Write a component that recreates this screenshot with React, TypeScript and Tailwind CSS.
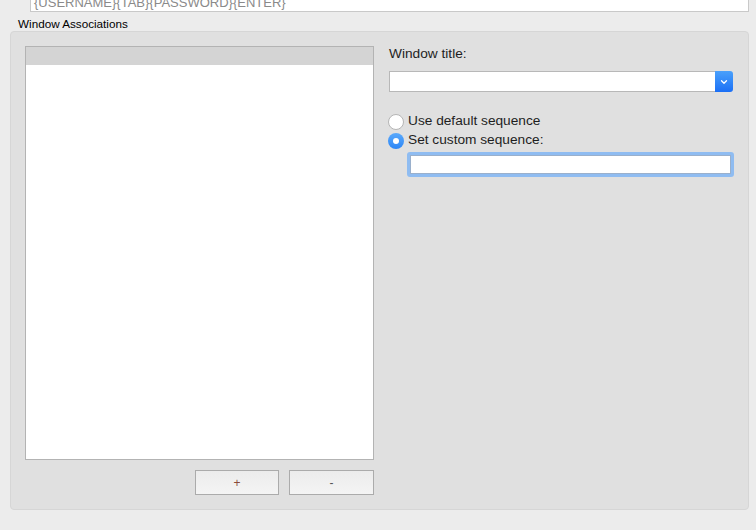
import { ChevronDown } from "lucide-react";

const App = () => {
  return (
    <div
      className="w-[756px] h-[530px] bg-[#ececec] overflow-hidden text-[13.7px] text-[#1e1e1e]"
      style={{ fontFamily: '"Liberation Sans", Arial, sans-serif' }}
    >
      {/* sequence field, scrolled partly out of view */}
      <div className="ml-[30px] mr-[7px] -mt-[12px] h-[24px] bg-white border border-[#c9c9c9] pl-[3px] text-[#8a8a8a] pt-[6px] leading-[15px] text-[13px] overflow-hidden">
        {"{USERNAME}{TAB}{PASSWORD}{ENTER}"}
      </div>

      <div className="ml-[18px] mt-[5px] text-[11.7px] leading-[13px] text-black">Window Associations</div>

      <div className="ml-[10px] mr-[7px] mt-[1px] h-[479px] bg-[#e0e0e0] border border-[#d6d6d6] rounded-[4px] flex">
        {/* left: list + buttons */}
        <div className="ml-[14px] mt-[14px] w-[349px] flex flex-col">
          <div className="h-[414px] border border-[#b3b3b3] bg-white flex flex-col">
            <div className="h-[18px] bg-[#d4d4d4]" />
          </div>
          <div className="mt-[10px] flex justify-end gap-[10px]">
            <button className="w-[84px] h-[25px] border border-[#ababab] bg-gradient-to-b from-[#ececec] to-[#f4f4f4] text-[12px] text-[#8a4a3a] leading-none">
              +
            </button>
            <button className="w-[85px] h-[25px] border border-[#ababab] bg-gradient-to-b from-[#ececec] to-[#f4f4f4] text-[12px] text-[#555] leading-none">
              -
            </button>
          </div>
        </div>

        {/* right: window settings */}
        <div className="ml-[15px] mt-[14px] w-[344px] flex flex-col">
          <div className="leading-[16px]">Window title:</div>
          <div className="mt-[9px] h-[21px] flex">
            <div className="flex-1 bg-white border border-[#b8b8b8] border-r-0" />
            <div className="w-[18px] h-[21px] rounded-r-[3px] bg-gradient-to-b from-[#4aa0fb] to-[#1b6ff5] flex items-center justify-center">
              <ChevronDown className="w-[10px] h-[10px] text-white" strokeWidth={3} />
            </div>
          </div>

          <div className="mt-[20px] flex items-center gap-[4px] h-[19px]">
            <div className="w-[16px] h-[16px] rounded-full bg-white border border-[#b5b5b5] -ml-[1px]" />
            <span>Use default sequence</span>
          </div>
          <div className="flex items-center gap-[4px] h-[19px]">
            <div className="w-[16px] h-[16px] rounded-full bg-gradient-to-b from-[#5aa9fb] to-[#2b86f6] flex items-center justify-center -ml-[1px]">
              <div className="w-[6px] h-[6px] rounded-full bg-white" />
            </div>
            <span>Set custom sequence:</span>
          </div>
          <div className="mt-[2px] ml-[18px] mr-[-1px] h-[25px] rounded-[3px] border-[3px] border-[#8fbcf1] bg-white">
            <div className="w-full h-full border border-[#9ab0cc] bg-white" />
          </div>
        </div>
      </div>
    </div>
  );
};

export default App;
